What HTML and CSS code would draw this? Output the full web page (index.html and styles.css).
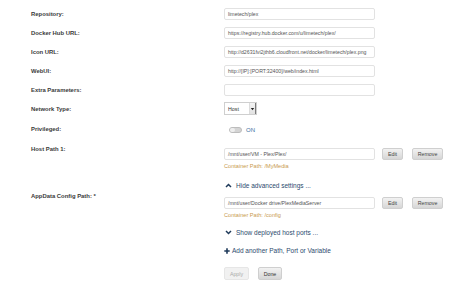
FILE: index.html
```html
<!DOCTYPE html>
<html>
<head>
<meta charset="utf-8">
<link rel="stylesheet" href="styles.css">
</head>
<body>
<div class="form">
  <div class="row"><div class="label">Repository:</div><div class="field"><div class="input">limetech/plex</div></div></div>
  <div class="row"><div class="label">Docker Hub URL:</div><div class="field"><div class="input">https://registry.hub.docker.com/u/limetech/plex/</div></div></div>
  <div class="row"><div class="label">Icon URL:</div><div class="field"><div class="input">http://d2631fvi2jthb6.cloudfront.net/docker/limetech/plex.png</div></div></div>
  <div class="row"><div class="label">WebUI:</div><div class="field"><div class="input">http://[IP]:[PORT:32400]/web/index.html</div></div></div>
  <div class="row"><div class="label">Extra Parameters:</div><div class="field"><div class="input"></div></div></div>
  <div class="row row-select"><div class="label">Network Type:</div><div class="field"><div class="select"><span>Host</span><span class="arrow"><svg width="5" height="4" viewBox="0 0 5 4"><path d="M0.8 1 L4.2 1 L2.5 3.3 Z" fill="#222"/></svg></span></div></div></div>
  <div class="row row-toggle"><div class="label">Privileged:</div><div class="field"><div class="toggle"><span class="switch"><span class="knob"></span></span><span class="on">ON</span></div></div></div>
  <div class="row row-path"><div class="label">Host Path 1:</div><div class="field">
    <div class="pathline"><div class="input">/mnt/user/VM - Plex/Plex/</div><button class="btn">Edit</button><button class="btn btn-wide">Remove</button></div>
    <div class="container-path">Container Path: /MyMedia</div>
    <div class="link link-hide"><svg class="chev" width="7" height="5" viewBox="0 0 7 5"><path d="M1 4 L3.5 1.5 L6 4" fill="none" stroke="#1f3a5a" stroke-width="1.5"/></svg>Hide advanced settings ...</div>
  </div></div>
  <div class="row row-path2"><div class="label">AppData Config Path: *</div><div class="field">
    <div class="pathline"><div class="input">/mnt/user/Docker drive/PlexMediaServer</div><button class="btn">Edit</button><button class="btn btn-wide">Remove</button></div>
    <div class="container-path">Container Path: /config</div>
    <div class="link link-show"><svg class="chev" width="7" height="5" viewBox="0 0 7 5"><path d="M1 1 L3.5 3.5 L6 1" fill="none" stroke="#1f3a5a" stroke-width="1.5"/></svg>Show deployed host ports ...</div>
    <div class="link link-add"><svg class="plus" width="6" height="6" viewBox="0 0 6 6"><path d="M3 0.3 V5.7 M0.3 3 H5.7" stroke="#1f3a5a" stroke-width="1.6"/></svg>Add another Path, Port or Variable</div>
    <div class="actions"><button class="btn btn-apply">Apply</button><button class="btn btn-done">Done</button></div>
  </div></div>
</div>
</body>
</html>
```

FILE: styles.css
```css
* { box-sizing: border-box; }
html, body { margin: 0; padding: 0; background: #fff; }
body { font-family: "Liberation Sans", Arial, sans-serif; color: #333; }
.form { padding: 8px 0 0 31px; display: flex; flex-direction: column; }
.row { display: grid; grid-template-columns: 193px 1fr; height: 19px; }
.label { font-size: 5.9px; font-weight: bold; color: #3a3a3a; line-height: 12px; }
.field { display: flex; flex-direction: column; }
.input {
  width: 151px; height: 12px; border: 1px solid #e2e2e2; border-radius: 2px;
  font-size: 5.2px; color: #555; line-height: 10px; padding-left: 3px; white-space: nowrap; overflow: hidden;
  background: #fff;
}
.row-select { height: 21px; margin-top: -1px; }
.row-select .label { line-height: 13px; margin-top: 1px; }
.select {
  width: 33px; height: 13px; border: 1px solid #cfcfcf; display: flex; align-items: center; justify-content: space-between;
  font-size: 5.3px; color: #333; padding-left: 3px; background: #fff;
}
.select .arrow { width: 7px; height: 11px; border-left: 1px solid #dcdcdc; border-right: 1px solid #7a7a7a; background: linear-gradient(#f4f4f4, #e2e2e2); display: flex; align-items: center; justify-content: center; }
.row-toggle { height: 22px; }
.row-toggle .label { line-height: 11px; margin-top: 1px; }
.toggle { display: flex; align-items: center; height: 10px; margin-top: 2px; margin-left: 5px; }
.switch { width: 13px; height: 6px; border-radius: 3px; background: #d4d4d4; border: 1px solid #bdbdbd; position: relative; }
.knob { position: absolute; left: 0; top: 0; width: 5px; height: 4px; background: #eee; border-radius: 2px; }
.on { font-size: 6px; color: #3d6fa0; margin-left: 4px; }
.row-path { height: 52px; }
.row-path .label { line-height: 9px; }
.row-path .field { padding-top: 3px; }
.pathline { display: flex; align-items: center; gap: 0; }
.btn {
  font-family: "Liberation Sans", Arial, sans-serif; font-size: 5.3px; color: #444; height: 12px;
  border: 1px solid #cfcfcf; border-radius: 2px; background: linear-gradient(#f2f2f2, #d6d6d6); padding: 0; margin-left: 7px;
}
.pathline .btn { width: 21px; }
.pathline .btn-wide { width: 31px; margin-left: 9px; }
.container-path { font-size: 5.6px; color: #c89a4e; line-height: 8px; margin-top: 2px; }
.link { font-size: 6.5px; color: #2c4a6e; display: flex; align-items: center; line-height: 9px; }
.link-hide { margin-top: 11px; }
.chev { margin-right: 4px; margin-left: 1px; }
.plus { margin-right: 2px; }
.row-path2 { height: auto; }
.row-path2 .label { line-height: 8px; margin-top: -5px; }
.row-path2 .field { padding-top: 0; }
.link-show { margin-top: 9px; }
.link-add { margin-top: 9px; }
.actions { display: flex; margin-top: 12px; }
.actions .btn { height: 13px; margin-left: 0; }
.btn-apply { width: 25px; color: #aaa; background: #f1f1f1; border-color: #e6e6e6; }
.btn-done { width: 24px; margin-left: 9px !important; color: #333; }
```
